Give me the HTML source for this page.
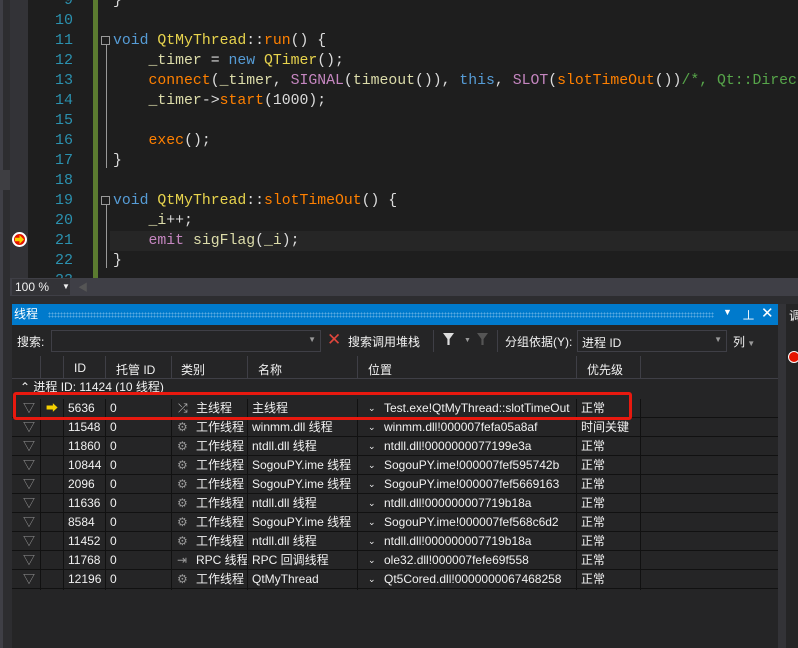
<!DOCTYPE html>
<html><head><meta charset="utf-8"><style>
*{margin:0;padding:0;box-sizing:border-box}
body{width:798px;height:648px;overflow:hidden;background:#2d2d30;position:relative;font-family:"Liberation Sans","Noto Sans CJK SC",sans-serif;color:#f1f1f1;font-size:12px}
.a{position:absolute}
.code{position:absolute;left:10px;top:0;width:788px;height:278px;background:#1e1e1e;overflow:hidden}
.gut{position:absolute;left:10px;top:0;width:18px;height:278px;background:#333337}
.ln{position:absolute;left:28px;width:45px;text-align:right;color:#2b91af;font-family:"Liberation Mono",monospace;font-size:15px;line-height:20px}
.cl{position:absolute;left:103px;font-family:"Liberation Mono",monospace;font-size:14.8px;line-height:20px;white-space:pre;color:#dcdcdc}
.k{color:#569cd6}.f{color:#ff8000}.t{color:#e8d44d}.m{color:#c586c0}.c{color:#57a64a}.v{color:#dcdcaa}
.row{position:absolute;left:12px;width:766px;height:19px;border-bottom:1px solid #111;line-height:18px;font-size:12px}
.row span{position:absolute;top:0}
.vl{position:absolute;width:1px;background:#111}
</style></head><body>
<div class="a" style="left:0;top:0;width:3px;height:648px;background:#3f3f46"></div>
<div class="code">
<div class="a" style="left:83px;top:0;width:5px;height:278px;background:#5b7b30"></div>
<div class="a" style="left:100px;top:231px;width:688px;height:20px;background:#262626"></div>
<div class="cl" style="top:-9px">}</div>
<div class="cl" style="top:31px"><span class="k">void</span> <span class="t">QtMyThread</span>::<span class="f">run</span>() {</div>
<div class="cl" style="top:51px">    <span class="v">_timer</span> = <span class="k">new</span> <span class="t">QTimer</span>();</div>
<div class="cl" style="top:71px">    <span class="f">connect</span>(<span class="v">_timer</span>, <span class="m">SIGNAL</span>(<span class="v">timeout</span>()), <span class="k">this</span>, <span class="m">SLOT</span>(<span class="f">slotTimeOut</span>())<span class="c">/*, Qt::Direc</span></div>
<div class="cl" style="top:91px">    <span class="v">_timer</span>-&gt;<span class="f">start</span>(1000);</div>
<div class="cl" style="top:131px">    <span class="f">exec</span>();</div>
<div class="cl" style="top:151px">}</div>
<div class="cl" style="top:191px"><span class="k">void</span> <span class="t">QtMyThread</span>::<span class="f">slotTimeOut</span>() {</div>
<div class="cl" style="top:211px">    <span class="v">_i</span>++;</div>
<div class="cl" style="top:231px">    <span class="m">emit</span> <span class="v">sigFlag</span>(<span class="v">_i</span>);</div>
<div class="cl" style="top:251px">}</div>
</div>
<div class="gut"></div>
<div class="a" style="left:0;top:170px;width:10px;height:20px;background:#3e3e42"></div>
<div class="ln" style="top:-9px">9</div>
<div class="ln" style="top:11px">10</div>
<div class="ln" style="top:31px">11</div><div class="ln" style="top:51px">12</div><div class="ln" style="top:71px">13</div><div class="ln" style="top:91px">14</div><div class="ln" style="top:111px">15</div><div class="ln" style="top:131px">16</div><div class="ln" style="top:151px">17</div><div class="ln" style="top:171px">18</div><div class="ln" style="top:191px">19</div><div class="ln" style="top:211px">20</div><div class="ln" style="top:231px">21</div><div class="ln" style="top:251px">22</div><div class="ln" style="top:271px">23</div>
<div class="a" style="left:101px;top:36px;width:9px;height:9px;border:1px solid #999"></div>
<div class="a" style="left:101px;top:196px;width:9px;height:9px;border:1px solid #999"></div>
<div class="a" style="left:106px;top:45px;width:1px;height:123px;background:#999"></div>
<div class="a" style="left:106px;top:205px;width:1px;height:63px;background:#999"></div>
<div class="a" style="left:12px;top:232px;width:15px;height:15px;border-radius:50%;background:#e51400;border:2px solid #fff"></div>
<div class="a" style="left:15px;top:235px;width:9px;height:9px;background:#f5d000;clip-path:polygon(0 30%,50% 30%,50% 0,100% 50%,50% 100%,50% 70%,0 70%)"></div>
<div class="a" style="left:10px;top:278px;width:788px;height:18px;background:#3f3f46"></div>
<div class="a" style="left:12px;top:279px;width:58px;height:16px;background:#333337;font-size:12px;line-height:16px;padding-left:3px">100 %<span style="position:absolute;left:50px;font-size:8px">▼</span></div>
<div class="a" style="left:78px;top:279px;font-size:10px;color:#555">◀</div>
<!-- panel -->
<div class="a" style="left:12px;top:304px;width:766px;height:344px;background:#252526"></div>
<div class="a" style="left:12px;top:304px;width:766px;height:21px;background:#007acc"></div>
<div class="a" style="left:14px;top:306px;font-size:12px;line-height:17px;color:#fff">线程</div>
<div class="a" style="left:48px;top:312px;width:666px;height:6px;background-image:radial-gradient(#5aa9e0 40%,transparent 45%);background-size:3px 3px"></div>
<div class="a" style="left:723px;top:307px;font-size:9px;color:#fff">▼</div>
<div class="a" style="left:742px;top:305px;font-size:13px;color:#fff">⊥</div>
<div class="a" style="left:761px;top:304px;font-size:15px;color:#fff">✕</div>
<div class="a" style="left:17px;top:333px;font-size:12px">搜索:</div>
<div class="a" style="left:51px;top:330px;width:270px;height:22px;border:1px solid #3f3f46;background:#252526"><span style="position:absolute;right:4px;top:4px;font-size:8px;color:#999">▼</span></div>
<div class="a" style="left:327px;top:330px;font-size:17px;color:#e0463c;line-height:20px">✕</div>
<div class="a" style="left:348px;top:333px">搜索调用堆栈</div>
<div class="a" style="left:433px;top:330px;width:1px;height:22px;background:#3f3f46"></div>
<div class="a" style="left:443px;top:333px;width:11px;height:12px;background:#ddd;clip-path:polygon(0 0,100% 0,60% 50%,60% 100%,40% 100%,40% 50%)"></div>
<div class="a" style="left:464px;top:337px;font-size:7px;color:#999">▼</div>
<div class="a" style="left:477px;top:333px;width:11px;height:12px;background:#555;clip-path:polygon(0 0,100% 0,60% 50%,60% 100%,40% 100%,40% 50%)"></div>
<div class="a" style="left:497px;top:330px;width:1px;height:22px;background:#3f3f46"></div>
<div class="a" style="left:505px;top:333px">分组依据(Y):</div>
<div class="a" style="left:577px;top:330px;width:150px;height:22px;border:1px solid #3f3f46;padding:3px 4px">进程 ID<span style="position:absolute;right:4px;top:4px;font-size:8px;color:#999">▼</span></div>
<div class="a" style="left:733px;top:333px">列<span style="font-size:8px;color:#999"> ▼</span></div>
<!-- header -->
<div class="a" style="left:12px;top:356px;width:766px;height:23px;border-bottom:1px solid #3f3f46"></div>
<div class="vl" style="left:40px;top:356px;height:23px;background:#3f3f46"></div>
<div class="vl" style="left:63px;top:356px;height:23px;background:#3f3f46"></div>
<div class="vl" style="left:105px;top:356px;height:23px;background:#3f3f46"></div>
<div class="vl" style="left:171px;top:356px;height:23px;background:#3f3f46"></div>
<div class="vl" style="left:247px;top:356px;height:23px;background:#3f3f46"></div>
<div class="vl" style="left:357px;top:356px;height:23px;background:#3f3f46"></div>
<div class="vl" style="left:576px;top:356px;height:23px;background:#3f3f46"></div>
<div class="vl" style="left:640px;top:356px;height:23px;background:#3f3f46"></div>
<div class="a" style="left:74px;top:361px">ID</div>
<div class="a" style="left:116px;top:361px">托管 ID</div>
<div class="a" style="left:181px;top:361px">类别</div>
<div class="a" style="left:258px;top:361px">名称</div>
<div class="a" style="left:368px;top:361px">位置</div>
<div class="a" style="left:587px;top:361px">优先级</div>
<div class="a" style="left:20px;top:380px;font-size:12px;line-height:14px;height:12px;overflow:hidden">⌃ 进程 ID: 11424 (10 线程)</div>
<div class="row" style="top:399px"><span style="left:11px;color:#999">▽</span><span style="left:34px;color:#f5d000">➡</span><span style="left:56px">5636</span><span style="left:98px">0</span><span style="left:166px;color:#bbb">⤮</span><span style="left:184px">主线程</span><span style="left:240px">主线程</span><span style="left:356px;font-size:9px">⌄</span><span style="left:372px">Test.exe!QtMyThread::slotTimeOut</span><span style="left:569px">正常</span></div>
<div class="row" style="top:418px"><span style="left:11px;color:#999">▽</span><span style="left:56px">11548</span><span style="left:98px">0</span><span style="left:165px;color:#999">⚙</span><span style="left:184px">工作线程</span><span style="left:240px">winmm.dll 线程</span><span style="left:356px;font-size:9px">⌄</span><span style="left:372px">winmm.dll!000007fefa05a8af</span><span style="left:569px">时间关键</span></div>
<div class="row" style="top:437px"><span style="left:11px;color:#999">▽</span><span style="left:56px">11860</span><span style="left:98px">0</span><span style="left:165px;color:#999">⚙</span><span style="left:184px">工作线程</span><span style="left:240px">ntdll.dll 线程</span><span style="left:356px;font-size:9px">⌄</span><span style="left:372px">ntdll.dll!0000000077199e3a</span><span style="left:569px">正常</span></div>
<div class="row" style="top:456px"><span style="left:11px;color:#999">▽</span><span style="left:56px">10844</span><span style="left:98px">0</span><span style="left:165px;color:#999">⚙</span><span style="left:184px">工作线程</span><span style="left:240px">SogouPY.ime 线程</span><span style="left:356px;font-size:9px">⌄</span><span style="left:372px">SogouPY.ime!000007fef595742b</span><span style="left:569px">正常</span></div>
<div class="row" style="top:475px"><span style="left:11px;color:#999">▽</span><span style="left:56px">2096</span><span style="left:98px">0</span><span style="left:165px;color:#999">⚙</span><span style="left:184px">工作线程</span><span style="left:240px">SogouPY.ime 线程</span><span style="left:356px;font-size:9px">⌄</span><span style="left:372px">SogouPY.ime!000007fef5669163</span><span style="left:569px">正常</span></div>
<div class="row" style="top:494px"><span style="left:11px;color:#999">▽</span><span style="left:56px">11636</span><span style="left:98px">0</span><span style="left:165px;color:#999">⚙</span><span style="left:184px">工作线程</span><span style="left:240px">ntdll.dll 线程</span><span style="left:356px;font-size:9px">⌄</span><span style="left:372px">ntdll.dll!000000007719b18a</span><span style="left:569px">正常</span></div>
<div class="row" style="top:513px"><span style="left:11px;color:#999">▽</span><span style="left:56px">8584</span><span style="left:98px">0</span><span style="left:165px;color:#999">⚙</span><span style="left:184px">工作线程</span><span style="left:240px">SogouPY.ime 线程</span><span style="left:356px;font-size:9px">⌄</span><span style="left:372px">SogouPY.ime!000007fef568c6d2</span><span style="left:569px">正常</span></div>
<div class="row" style="top:532px"><span style="left:11px;color:#999">▽</span><span style="left:56px">11452</span><span style="left:98px">0</span><span style="left:165px;color:#999">⚙</span><span style="left:184px">工作线程</span><span style="left:240px">ntdll.dll 线程</span><span style="left:356px;font-size:9px">⌄</span><span style="left:372px">ntdll.dll!000000007719b18a</span><span style="left:569px">正常</span></div>
<div class="row" style="top:551px"><span style="left:11px;color:#999">▽</span><span style="left:56px">11768</span><span style="left:98px">0</span><span style="left:165px;color:#999">⇥</span><span style="left:184px">RPC 线程</span><span style="left:240px">RPC 回调线程</span><span style="left:356px;font-size:9px">⌄</span><span style="left:372px">ole32.dll!000007fefe69f558</span><span style="left:569px">正常</span></div>
<div class="row" style="top:570px"><span style="left:11px;color:#999">▽</span><span style="left:56px">12196</span><span style="left:98px">0</span><span style="left:165px;color:#999">⚙</span><span style="left:184px">工作线程</span><span style="left:240px">QtMyThread</span><span style="left:356px;font-size:9px">⌄</span><span style="left:372px">Qt5Cored.dll!0000000067468258</span><span style="left:569px">正常</span></div>
<div class="vl" style="left:40px;top:399px;height:191px"></div>
<div class="vl" style="left:63px;top:399px;height:191px"></div>
<div class="vl" style="left:105px;top:399px;height:191px"></div>
<div class="vl" style="left:171px;top:399px;height:191px"></div>
<div class="vl" style="left:247px;top:399px;height:191px"></div>
<div class="vl" style="left:357px;top:399px;height:191px"></div>
<div class="vl" style="left:576px;top:399px;height:191px"></div>
<div class="vl" style="left:640px;top:399px;height:191px"></div>
<div class="a" style="left:13px;top:392px;width:619px;height:28px;border:3px solid #e8190f;border-radius:3px"></div>
<!-- right strip -->
<div class="a" style="left:778px;top:304px;width:8px;height:344px;background:#333337"></div>
<div class="a" style="left:786px;top:304px;width:12px;height:344px;background:#252526"></div>
<div class="a" style="left:789px;top:307px;font-size:12px">调</div>
<div class="a" style="left:788px;top:351px;width:12px;height:12px;border-radius:50%;background:#e51400;border:1px solid #fff"></div>
</body></html>
